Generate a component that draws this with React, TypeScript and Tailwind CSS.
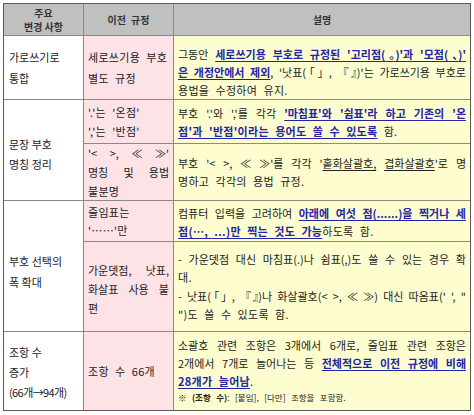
import React from "react";

const B = ({ children }: { children: React.ReactNode }) => (
  <span className="font-bold text-[#2424a6] underline decoration-[1px] underline-offset-2">{children}</span>
);

const U = ({ children }: { children: React.ReactNode }) => (
  <span className="underline decoration-[1px] underline-offset-2">{children}</span>
);

const L = ({ children, j = false, cls = "" }: { children: React.ReactNode; j?: boolean; cls?: string }) => (
  <div
    className={
      (j
        ? "whitespace-nowrap text-justify [text-align-last:justify] "
        : "whitespace-nowrap [word-spacing:3.5px] tracking-[0.3px] ") + cls
    }
  >
    {children}
  </div>
);

const N = ({ children }: { children: React.ReactNode }) => (
  <span className="tracking-[-3px]">{children}</span>
);

const M = ({ children }: { children: React.ReactNode }) => (
  <span className="tracking-[-4px]">{children}</span>
);

export default function App() {
  return (
    <div className="w-[474px] h-[415px] bg-white p-[3px] font-['Noto_Sans_CJK_KR',sans-serif] text-[#222]">
      <div className="grid w-[468px] grid-cols-[79px_89px_296px] grid-rows-[31px_63px_43px_56px_40px_89px_78px] gap-px bg-[#8a8a8a] border border-[#5a5a5a]">
        {/* header */}
        <div className="col-start-1 row-start-1 flex flex-col items-center justify-center bg-[#c0c0c0] text-[10px] leading-[14px] font-bold text-[#333]">
          <div>주요</div>
          <div>변경 사항</div>
        </div>
        <div className="col-start-2 row-start-1 flex items-center justify-center bg-[#c0c0c0] text-[10px] font-bold text-[#333] [word-spacing:3px]">
          이전 규정
        </div>
        <div className="col-start-3 row-start-1 flex items-center justify-center bg-[#c0c0c0] text-[10px] font-bold text-[#333]">
          설명
        </div>

        {/* column 1 */}
        <div className="col-start-1 row-start-2 flex flex-col justify-center bg-white px-[5px] text-[11px] leading-[21px]">
          <div>가로쓰기로</div>
          <div>통합</div>
        </div>
        <div className="col-start-1 row-start-3 row-span-2 flex flex-col justify-center bg-white px-[5px] pt-[8px] text-[11px] leading-[20px]">
          <div>문장 부호</div>
          <div>명칭 정리</div>
        </div>
        <div className="col-start-1 row-start-5 row-span-2 flex flex-col justify-center bg-white px-[5px] pt-[12px] text-[11px] leading-[21px]">
          <div>부호 선택의</div>
          <div>폭 확대</div>
        </div>
        <div className="col-start-1 row-start-7 flex flex-col justify-center bg-white px-[5px] pt-[2px] text-[11px] leading-[20px]">
          <div>조항 수</div>
          <div>증가</div>
          <div className="tracking-[-0.6px]">(66개→94개)</div>
        </div>

        {/* column 2 */}
        <div className="col-start-2 row-start-2 flex flex-col justify-center bg-[#fde2e6] px-[4px] text-[11px] leading-[21px]">
          <L>세로쓰기용 부호</L>
          <L>별도 규정</L>
        </div>
        <div className="col-start-2 row-start-3 flex flex-col justify-center bg-[#fde2e6] px-[4px] text-[11px] leading-[19px]">
          <L>'.'는 '온점'</L>
          <L>','는 '반점'</L>
        </div>
        <div className="col-start-2 row-start-4 flex flex-col justify-center bg-[#fde2e6] px-[4px] text-[11px] leading-[19px]">
          <L j>'&lt; &gt;, ≪ ≫'</L>
          <L j>명칭 및 용법</L>
          <L>불분명</L>
        </div>
        <div className="col-start-2 row-start-5 flex flex-col justify-center bg-[#fde2e6] px-[4px] text-[11px] leading-[18px]">
          <L>줄임표는</L>
          <L>'……'만</L>
        </div>
        <div className="col-start-2 row-start-6 flex flex-col justify-center bg-[#fde2e6] px-[4px] pt-[6px] text-[11px] leading-[19px]">
          <L j>가운뎃점, 낫표,</L>
          <L j>화살표 사용 불</L>
          <L>편</L>
        </div>
        <div className="col-start-2 row-start-7 flex flex-col justify-center bg-[#fde2e6] px-[4px] text-[11px] leading-[19px]">
          <L>조항 수 66개</L>
        </div>

        {/* column 3 */}
        <div className="col-start-3 row-start-2 flex flex-col justify-start bg-[#fdfdd0] px-[4px] pt-[9px] text-[11px] leading-[18px]">
          <L j>
            그동안 <B>세로쓰기용 부호로 규정된 '고리점(<M>｡</M>)'과 '모점(<M>､</M>)'</B>
          </L>
          <L j>
            <B>은 개정안에서 제외</B>, '낫표(<N>「 」</N>, <N>『 』</N>)'는 가로쓰기용 부호로
          </L>
          <L>용법을 수정하여 유지.</L>
        </div>
        <div className="col-start-3 row-start-3 flex flex-col justify-center bg-[#fdfdd0] px-[4px] text-[11px] leading-[18px]">
          <L j>
            부호 '.'와 ','를 각각 <B>'마침표'와 '쉼표'라 하고 기존의 '온</B>
          </L>
          <L>
            <B>점'과 '반점'이라는 용어도 쓸 수 있도록</B> 함.
          </L>
        </div>
        <div className="col-start-3 row-start-4 flex flex-col justify-center bg-[#fdfdd0] px-[4px] text-[11px] leading-[18px]">
          <L j>
            부호 '&lt; &gt;, ≪ ≫'를 각각 '<U>홑화살괄호,</U> <U>겹화살괄호</U>'로 명
          </L>
          <L>명하고 각각의 용법 규정.</L>
        </div>
        <div className="col-start-3 row-start-5 flex flex-col justify-center bg-[#fdfdd0] px-[4px] pt-[2px] text-[11px] leading-[18px]">
          <L j>
            컴퓨터 입력을 고려하여 <B>아래에 여섯 점(......)을 찍거나 세</B>
          </L>
          <L>
            <B>점(⋯, ...)만 찍는 것도 가능</B>하도록 함.
          </L>
        </div>
        <div className="col-start-3 row-start-6 flex flex-col justify-center bg-[#fdfdd0] px-[4px] text-[11px] leading-[18.5px]">
          <L j>- 가운뎃점 대신 마침표(.)나 쉼표(,)도 쓸 수 있는 경우 확</L>
          <L>대.</L>
          <L j>
            - 낫표(<N>「 」</N>, <N>『 』</N>)나 화살괄호(&lt; &gt;, ≪ ≫) 대신 따옴표(' ', "
          </L>
          <L>")도 쓸 수 있도록 함.</L>
        </div>
        <div className="col-start-3 row-start-7 flex flex-col justify-start bg-[#fdfdd0] px-[4px] pt-[4px] text-[11px] leading-[18px]">
          <L j>소괄호 관련 조항은 3개에서 6개로, 줄임표 관련 조항은</L>
          <L j>
            2개에서 7개로 늘어나는 등 <B>전체적으로 이전 규정에 비해</B>
          </L>
          <L>
            <B>28개가 늘어남</B>.
          </L>
          <L cls="text-[8.5px] leading-[14px] [word-spacing:1px] tracking-[0px]">
            ※ <span className="font-bold">(조항 수)</span>: [붙임], [다만] 조항을 포함함.
          </L>
        </div>
      </div>
    </div>
  );
}
